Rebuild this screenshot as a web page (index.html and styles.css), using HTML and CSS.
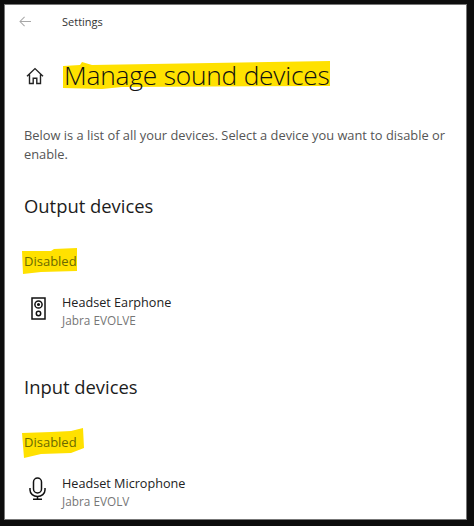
FILE: index.html
```html
<!DOCTYPE html>
<html lang="en">
<head>
<meta charset="utf-8">
<title>Settings</title>
<link rel="stylesheet" href="styles.css">
</head>
<body>
<main class="window">
  <header class="titlebar">
    <svg class="back" viewBox="0 0 14 12" aria-hidden="true"><path d="M13 6H1.2M6 1 1 6l5 5"/></svg>
    <span class="app">Settings</span>
  </header>
  <div class="page-head">
    <svg class="home" viewBox="0 0 18 18" aria-hidden="true"><path d="M1 9.2 9 1.6l8 7.6M3.5 7.400V16.500h3.700v-5.200h3.600v5.200h3.700V7.400"/></svg>
    <h1 class="title"><svg class="mark mark-title" viewBox="0 0 268 28" preserveAspectRatio="none" aria-hidden="true"><path d="M1 5 18 4 20 1 30 4 268 0V25L60 26 40 28 1 27Z"/></svg><span>Manage sound devices</span></h1>
  </div>
  <p class="intro">Below is a list of all your devices. Select a device you want to disable or enable.</p>
  <h2 class="section first">Output devices</h2>
  <div class="state"><svg class="mark mark-state" viewBox="0 0 56 26" preserveAspectRatio="none" aria-hidden="true"><path d="M1 3 30 3 33 1 56 0 56 23 20 24 2 26Z"/></svg><span>Disabled</span></div>
  <div class="device">
    <svg class="icon icon-speaker" viewBox="0 0 15 23" aria-hidden="true"><rect x="1" y="1" width="13" height="21"/><circle cx="7.500" cy="7.500" r="3.600"/><circle cx="7.500" cy="7.500" r=".8"/><circle cx="7.500" cy="16.500" r="2.200"/></svg>
    <div class="device-text"><div class="name">Headset Earphone</div><div class="model">Jabra EVOLVE</div></div>
  </div>
  <h2 class="section">Input devices</h2>
  <div class="state"><svg class="mark mark-state-2" viewBox="0 0 63 30" preserveAspectRatio="none" aria-hidden="true"><path d="M1 5 30 4 50 3 62 0 63 20 50 25 20 26 3 30Z"/></svg><span>Disabled</span></div>
  <div class="device">
    <svg class="icon icon-mic" viewBox="0 0 17 23" aria-hidden="true"><rect x="4.500" y="1" width="8" height="15" rx="4"/><path d="M1 11v2a7.500 6.500 0 0 0 15 0v-2M8.500 19.500v2.700M4 22.200h9"/></svg>
    <div class="device-text"><div class="name">Headset Microphone</div><div class="model">Jabra EVOLV</div></div>
  </div>
</main>
</body>
</html>
```
FILE: styles.css
```css
html, body { margin: 0; padding: 0; height: 100%; background: #0d0d0d; }
body { box-sizing: border-box; padding: 5px 8px 7px 5px; height: 526px; overflow: hidden; font-family: "Open Sans", "Noto Sans", sans-serif; }
.window { height: 514px; background: #fff; box-sizing: border-box; padding: 0 0 0 19px; overflow: hidden; color: #111; isolation: isolate; outline: 1px solid #777; }
.titlebar { display: flex; align-items: center; height: 33px; }
.back { width: 13px; height: 11px; margin: 0 30px 0 -5px; fill: none; stroke: #a8a8a8; stroke-width: 1.100; }
.app { font-size: 11px; color: #333; }
.page-head { display: flex; align-items: center; height: 34px; margin-top: 21px; }
.home { width: 18px; height: 18px; margin: 0 20px 0 2px; fill: none; stroke: #222; stroke-width: 1.400; }
.title { margin: 0 0 2px; font-size: 26.300px; font-weight: 300; letter-spacing: -.2px; line-height: 34px; position: relative; white-space: nowrap; }
.title span, .state span { position: relative; }
.mark { position: absolute; z-index: -1; fill: #ffe100; }
.mark-title { left: -2px; top: 3px; width: 268px; height: 28px; }
.intro { margin: 33px 16px 0 0; font-size: 12.850px; line-height: 19px; color: #555; }
.section { margin: 44px 0 0; font-size: 18.400px; font-weight: 400; line-height: 26px; color: #1c1c1c; }
.section.first { margin-top: 29px; }
.state { position: relative; width: max-content; margin-top: 33px; font-size: 13px; line-height: 18px; color: #6b6a00; }
.mark-state { left: -3px; top: -4px; width: 56px; height: 26px; }
.mark-state-2 { left: -3px; top: -5px; width: 63px; height: 30px; }
.device { display: flex; align-items: flex-start; margin-top: 23px; }
.icon { width: 15px; height: 23px; margin: 4px 16px 0 7px; fill: none; stroke: #111; stroke-width: 1.500; }
.icon-mic { width: 17px; margin: 3px 16px 0 5px; }
.name { font-size: 12.650px; line-height: 18px; color: #222; }
.model { font-size: 11.800px; line-height: 19px; color: #767676; }
```
